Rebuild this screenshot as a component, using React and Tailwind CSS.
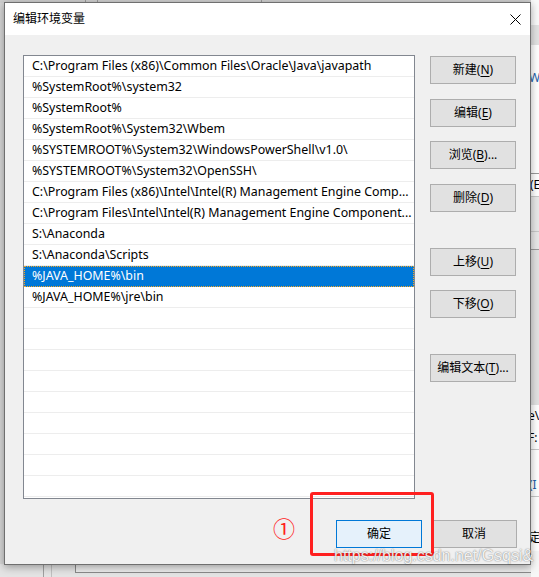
import React from "react";

const rows = [
  "C:\\Program Files (x86)\\Common Files\\Oracle\\Java\\javapath",
  "%SystemRoot%\\system32",
  "%SystemRoot%",
  "%SystemRoot%\\System32\\Wbem",
  "%SYSTEMROOT%\\System32\\WindowsPowerShell\\v1.0\\",
  "%SYSTEMROOT%\\System32\\OpenSSH\\",
  "C:\\Program Files (x86)\\Intel\\Intel(R) Management Engine Comp...",
  "C:\\Program Files\\Intel\\Intel(R) Management Engine Component...",
  "S:\\Anaconda",
  "S:\\Anaconda\\Scripts",
  "%JAVA_HOME%\\bin",
  "%JAVA_HOME%\\jre\\bin",
];

const FONT = { fontFamily: '"Noto Sans", "Noto Sans CJK SC", sans-serif' };

function Btn({ label, k, suffix = "", className = "" }) {
  return (
    <div
      className={
        "w-[86px] h-[28px] border border-[#adadad] bg-[#e1e1e1] flex items-center justify-center text-[12px] text-black " +
        className
      }
    >
      <span>
        {label}(<span className="underline underline-offset-2">{k}</span>){suffix}
      </span>
    </div>
  );
}

export default function App() {
  const total = 21;
  return (
    <div className="relative w-[539px] h-[577px] overflow-hidden bg-[#d6d6d6]" style={FONT}>
      {/* background desktop windows */}
      <div className="absolute left-0 top-0 w-[539px] h-[3px] bg-[#cfcfcf] flex">
        <div className="w-[86px] border-r border-[#9a9a9a]" />
        <div className="w-[12px] border-r border-[#9a9a9a]" />
        <div className="w-[164px] border-r border-[#9a9a9a]" />
      </div>
      <div className="absolute left-[531px] top-0 w-[8px] h-[577px] bg-[#f7f7f7] flex flex-col text-[12px] leading-[18px] overflow-hidden">
        <div className="h-[25px] bg-[#fafafa] shrink-0" />
        <div className="h-[20px] bg-[#e3e3e3] shrink-0" />
        <div className="h-[128px] bg-white pt-[24px] -ml-[2px] text-[#1e5fa8] shrink-0">Wi</div>
        <div className="h-[1px] bg-[#9a9a9a] shrink-0" />
        <div className="h-[22px] bg-white pt-[2px] -ml-[1px] shrink-0">(E</div>
        <div className="h-[1px] bg-[#c8c8c8] shrink-0" />
        <div className="h-[34px] bg-[#e8e8e8] shrink-0" />
        <div className="h-[1px] bg-[#c8c8c8] shrink-0" />
        <div className="h-[17px] bg-[#e8e8e8] shrink-0" />
        <div className="h-[1px] bg-[#9a9a9a] shrink-0" />
        <div className="h-[155px] bg-[#e2e2e2] shrink-0" />
        <div className="h-[22px] bg-white pt-[2px] -ml-[3px] shrink-0">e\</div>
        <div className="h-[22px] bg-white pt-[2px] -ml-[3px] shrink-0">F:</div>
        <div className="h-[1px] bg-[#c8c8c8] shrink-0" />
        <div className="h-[24px] bg-white shrink-0" />
        <div className="h-[22px] bg-white pt-[2px] -ml-[2px] text-[#1e5fa8] shrink-0">(I</div>
        <div className="h-[1px] bg-[#c8c8c8] shrink-0" />
        <div className="h-[30px] bg-white shrink-0" />
        <div className="h-[24px] bg-white pt-[2px] -ml-[2px] shrink-0">定</div>
      </div>
      <div className="absolute left-0 top-[564px] w-[531px] h-[13px] bg-[#e4e4e4] flex">
        <div className="w-[44px] border-r border-[#a0a0a0]" />
        <div className="w-[8px] border-r border-[#c0c0c0]" />
        <div className="w-[23px]" />
        <div className="flex-1 h-[9px] border-l border-b border-[#8a8a8a] bg-[#ececec]" />
      </div>

      {/* dialog */}
      <div className="absolute left-[4px] top-[2px] w-[527px] h-[563px] border border-[#6f6f6f] bg-[#f0f0f0] shadow-[0_2px_8px_rgba(0,0,0,0.35)] flex flex-col">
        <div className="h-[32px] bg-white flex items-center justify-between pl-[8px] pr-[9px] shrink-0">
          <span className="text-[12px] text-black">编辑环境变量</span>
          <svg width="11" height="11" viewBox="0 0 11 11">
            <path d="M0.5 0.5 L10.5 10.5 M10.5 0.5 L0.5 10.5" stroke="#000" strokeWidth="1" />
          </svg>
        </div>
        <div className="flex-1 flex flex-col pl-[18px] pr-[13px] pt-[20px]">
          <div className="flex gap-[15px]">
            <div className="w-[392px] h-[444px] border border-[#828790] bg-white overflow-hidden flex flex-col">
              {Array.from({ length: total }).map((_, i) => {
                const t = rows[i];
                const sel = i === 10;
                return (
                  <div
                    key={i}
                    className={
                      "h-[21px] shrink-0 flex items-center text-[12.4px] whitespace-nowrap overflow-hidden " +
                      (sel
                        ? "bg-[#0078d7] text-white border border-dotted border-[#f5a623] pl-[7px]"
                        : "border-b border-[#ededed] text-black pl-[8px]")
                    }
                  >
                    {t || ""}
                  </div>
                );
              })}
            </div>
            <div className="flex flex-col pt-[1px]">
              <Btn label="新建" k="N" />
              <Btn label="编辑" k="E" className="mt-[15px]" />
              <Btn label="浏览" k="B" suffix="..." className="mt-[14px]" />
              <Btn label="删除" k="D" className="mt-[15px]" />
              <Btn label="上移" k="U" className="mt-[36px]" />
              <Btn label="下移" k="O" className="mt-[14px]" />
              <Btn label="编辑文本" k="T" suffix="..." className="mt-[36px]" />
            </div>
          </div>
          <div className="flex justify-end items-center gap-[9px] mt-[21px]">
            <div className="w-[86px] h-[28px] border border-[#0078d7] bg-[#e5f1fb] flex items-center justify-center text-[12px] text-black">
              确定
            </div>
            <div className="w-[86px] h-[28px] border border-[#adadad] bg-[#e1e1e1] flex items-center justify-center text-[12px] text-black">
              取消
            </div>
          </div>
        </div>
      </div>

      {/* annotations */}
      <div className="absolute left-[310px] top-[492px] w-[124px] h-[64px] border-[3px] border-[#ff2020] rounded-[3px]" />
      <div className="absolute left-[273px] top-[514px] text-[22px] leading-[28px] text-[#ff2020]">①</div>
      <div
        className="absolute left-[334px] top-[546px] text-[16px] leading-[20px] text-white/90 whitespace-nowrap"
        style={{
          fontFamily: '"Liberation Sans", sans-serif',
          textShadow: "0 0 1px rgba(0,0,0,0.45), 0 0 2px rgba(0,0,0,0.25)",
        }}
      >
        https://blog.csdn.net/Gsqsi&amp;
      </div>
    </div>
  );
}
